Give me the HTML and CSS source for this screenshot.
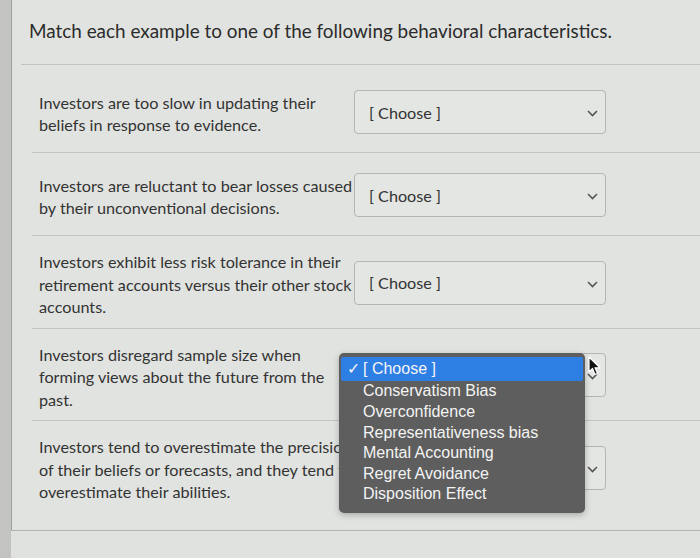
FILE: index.html
```html
<!DOCTYPE html>
<html lang="en">
<head>
<meta charset="utf-8">
<title>Matching question</title>
<link rel="stylesheet" href="styles.css">
</head>
<body>
<div class="question">
  <h1 class="title">Match each example to one of the following behavioral characteristics.</h1>
  <div class="list">
    <div class="row first">
      <div class="prompt">Investors are too slow in updating their beliefs in response to evidence.</div>
      <div class="select"><span class="value">[ Choose ]</span><svg class="chev" width="11" height="7" viewBox="0 0 11 7"><polyline points="1,1 5.5,5.5 10,1" fill="none" stroke="#555" stroke-width="1.6"/></svg></div>
    </div>
    <div class="row">
      <div class="prompt">Investors are reluctant to bear losses caused by their unconventional decisions.</div>
      <div class="select"><span class="value">[ Choose ]</span><svg class="chev" width="11" height="7" viewBox="0 0 11 7"><polyline points="1,1 5.5,5.5 10,1" fill="none" stroke="#555" stroke-width="1.6"/></svg></div>
    </div>
    <div class="row">
      <div class="prompt">Investors exhibit less risk tolerance in their retirement accounts versus their other stock accounts.</div>
      <div class="select"><span class="value">[ Choose ]</span><svg class="chev" width="11" height="7" viewBox="0 0 11 7"><polyline points="1,1 5.5,5.5 10,1" fill="none" stroke="#555" stroke-width="1.6"/></svg></div>
    </div>
    <div class="row">
      <div class="prompt">Investors disregard sample size when forming views about the future from the past.</div>
      <div class="select"><span class="value">[ Choose ]</span><svg class="chev" width="11" height="7" viewBox="0 0 11 7"><polyline points="1,1 5.5,5.5 10,1" fill="none" stroke="#555" stroke-width="1.6"/></svg>
        <ul class="menu">
          <li class="opt sel"><span class="check">✓</span>[ Choose ]</li>
          <li class="opt">Conservatism Bias</li>
          <li class="opt">Overconfidence</li>
          <li class="opt">Representativeness bias</li>
          <li class="opt">Mental Accounting</li>
          <li class="opt">Regret Avoidance</li>
          <li class="opt">Disposition Effect</li>
        </ul>
        <svg class="cursor" width="14" height="21" viewBox="0 0 14 21"><path d="M1,1 L1,16 L4.5,12.5 L7,18.5 L9.5,17.5 L7,11.8 L12,11.8 Z" fill="#111" stroke="#fff" stroke-width="1.2" stroke-linejoin="round"/></svg>
      </div>
    </div>
    <div class="row last">
      <div class="prompt">Investors tend to overestimate the precision of their beliefs or forecasts, and they tend to overestimate their abilities.</div>
      <div class="select"><span class="value">[ Choose ]</span><svg class="chev" width="11" height="7" viewBox="0 0 11 7"><polyline points="1,1 5.5,5.5 10,1" fill="none" stroke="#555" stroke-width="1.6"/></svg></div>
    </div>
  </div>
</div>
</body>
</html>
```
FILE: styles.css
```css
html, body {
  margin: 0;
  padding: 0;
}
body {
  width: 700px;
  height: 558px;
  overflow: hidden;
  background: linear-gradient(to right, #c3c4c2 0, #c3c4c2 11px, #e0e2df 11px);
  font-family: Lato, "Liberation Sans", sans-serif;
  color: #333;
}
.question {
  margin-left: 11px;
  border-left: 1px solid #9fa19f;
  border-bottom: 1px solid #b0b2af;
  background: #e1e3e0;
}
.title {
  margin: 0 0 0 9px;
  padding: 18px 0 20px 8px;
  font-size: 18.9px;
  line-height: 26px;
  font-weight: 400;
  color: #2b2b2b;
  border-bottom: 1px solid #c1c3c0;
}
.list {
  margin-left: 20px;
}
.row {
  display: flex;
  align-items: center;
  padding: 15px 0 9px 7px;
  border-top: 1px solid #c1c3c0;
}
.row.first {
  border-top: none;
  padding-top: 20px;
}
.row.last {
  padding-bottom: 26px;
}
.prompt {
  width: 315px;
  flex: none;
  font-size: 16.2px;
  line-height: 22.5px;
  color: #333;
}
.select {
  position: relative;
  box-sizing: border-box;
  width: 252px;
  height: 44px;
  margin: 5px 0 9px 0;
  padding: 0 7px 0 14px;
  border: 1px solid #b4b6b3;
  border-radius: 4px;
  background: #e4e6e3;
  display: flex;
  align-items: center;
  justify-content: space-between;
  font-size: 16.2px;
  color: #333;
}
.chev {
  margin-top: 3px;
}
.menu {
  position: absolute;
  left: -16px;
  top: -1px;
  z-index: 2;
  width: 246px;
  box-sizing: border-box;
  margin: 0;
  padding: 4px 2px 8px;
  list-style: none;
  background: #5d5e5d;
  border-radius: 5px;
  box-shadow: 0 2px 6px rgba(0, 0, 0, 0.25);
  font-family: "Liberation Sans", Arial, sans-serif;
  font-size: 16px;
  color: #f4f4f4;
}
.opt {
  position: relative;
  padding-left: 22px;
  line-height: 20.6px;
  white-space: nowrap;
}
.opt.sel {
  background: #2d7fe4;
  padding-top: 2px;
  padding-bottom: 1.5px;
  border-radius: 2px;
}
.check {
  position: absolute;
  left: 6px;
  font-size: 16px;
}
.cursor {
  position: absolute;
  left: 233px;
  top: 2px;
  z-index: 3;
}
```
